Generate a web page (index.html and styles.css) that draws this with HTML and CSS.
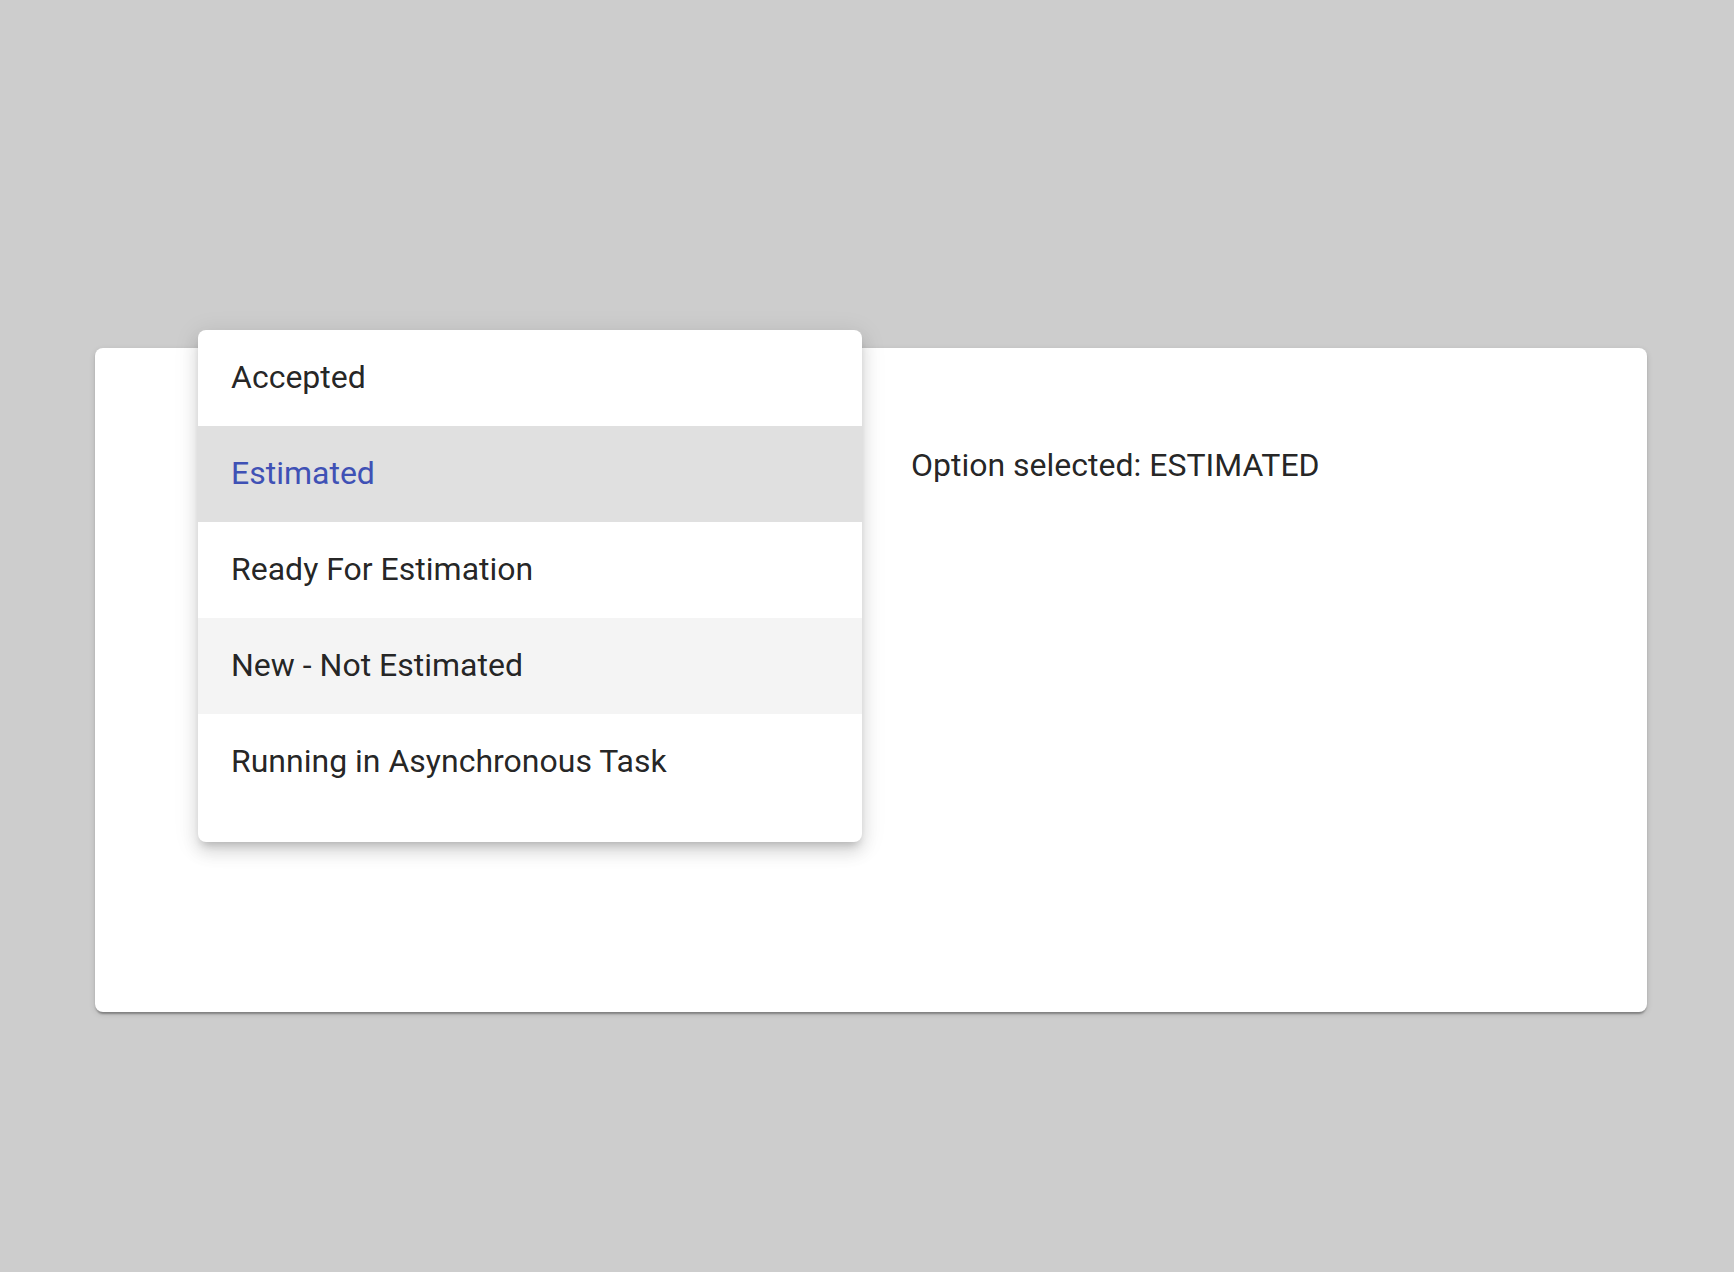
FILE: index.html
```html
<!DOCTYPE html>
<html lang="en">
<head>
    <meta charset="UTF-8">
    <title>Select status</title>
    <link rel="stylesheet" href="styles.css">
</head>
<body>
    <main class="card">
        <div class="field"></div>
        <p class="result">Option selected: ESTIMATED</p>

        <ul class="menu">
            <li class="option">Accepted</li>
            <li class="option selected">Estimated</li>
            <li class="option">Ready For Estimation</li>
            <li class="option hover">New - Not Estimated</li>
            <li class="option">Running in Asynchronous Task</li>
        </ul>
    </main>
</body>
</html>
```

FILE: styles.css
```css
body {
    margin: 0;
    padding: 348px 87px 0 95px;
    background: #cdcdcd;
    font-family: Roboto, "Liberation Sans", sans-serif;
    color: rgba(0, 0, 0, 0.87);
    height: 1272px;
    box-sizing: border-box;
}

.card {
    position: relative;
    display: flex;
    height: 664px;
    background: #fff;
    border-radius: 8px;
    box-shadow: 0 4px 2px -2px rgba(0, 0, 0, 0.2), 0 2px 2px 0 rgba(0, 0, 0, 0.14), 0 2px 6px 0 rgba(0, 0, 0, 0.12);
}

.field {
    width: 664px;
    margin-left: 103px;
    flex-shrink: 0;
}

.result {
    margin: 98px 0 0 49px;
    font-size: 32px;
}

.menu {
    position: absolute;
    top: -18px;
    left: 103px;
    width: 664px;
    margin: 0;
    padding: 0 0 32px;
    list-style: none;
    background: #fff;
    border-radius: 8px;
    overflow: hidden;
    box-shadow: 0 6px 8px -4px rgba(0, 0, 0, 0.2), 0 10px 16px 1px rgba(0, 0, 0, 0.1), 0 4px 24px 3px rgba(0, 0, 0, 0.08);
}

.option {
    display: flex;
    align-items: center;
    height: 96px;
    padding: 0 33px 3px;
    box-sizing: border-box;
    font-size: 32px;
}

.option.selected {
    background: #e0e0e0;
    color: #3f51b5;
}

.option.hover {
    background: #f4f4f4;
}
```
